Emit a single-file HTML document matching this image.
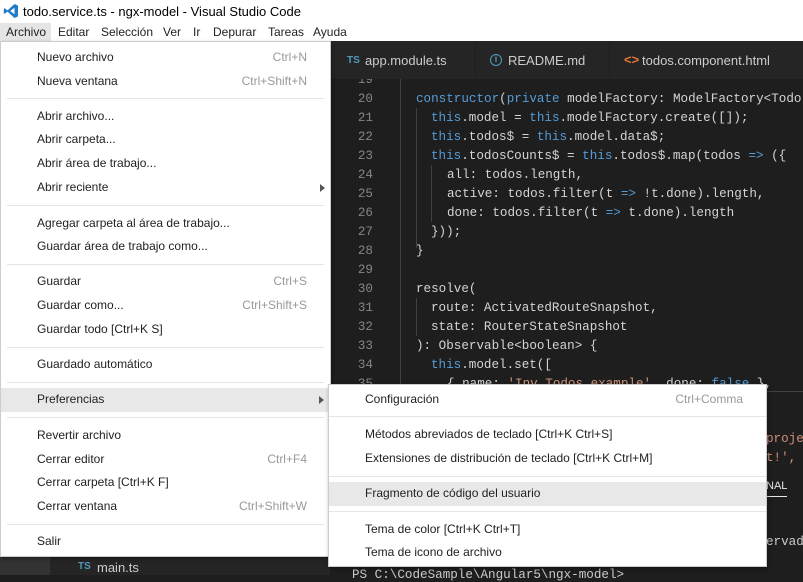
<!DOCTYPE html>
<html><head><meta charset="utf-8"><style>
*{margin:0;padding:0;box-sizing:border-box}
body{width:803px;height:575px;overflow:hidden;position:relative;background:#1e1e1e;font-family:"Liberation Sans",sans-serif;font-size:12px}
.a{position:absolute;white-space:nowrap}
.code{font-family:"Liberation Mono",monospace;font-size:12.6px;color:#d4d4d4}
.ln{color:#858585;width:30px;text-align:right;left:343px}
.k{color:#569cd6}.s{color:#ce9178}
.menu{position:absolute;background:#fff;border:1px solid #ccc;box-shadow:1px 2px 4px rgba(0,0,0,.35);z-index:5}
.it{position:absolute;left:0;right:0;height:23px;line-height:23px;color:#222}
.it .t{position:absolute;left:36px}
.it .sc{position:absolute;right:23px;color:#999}
.sep{position:absolute;left:6px;right:6px;height:1px;background:#e5e5e5}
.hl{background:#e8e8e8}
.arr{position:absolute;right:5px;top:8px;width:0;height:0;border-left:5px solid #555;border-top:4px solid transparent;border-bottom:4px solid transparent}
.tb{z-index:3}
</style></head><body>
<!-- title bar -->
<div class="a" style="left:0;top:0;width:803px;height:23px;background:#fff"></div>
<svg class="a" style="left:3px;top:3px" width="16" height="16" viewBox="0 0 16 16"><path d="M11.5 1 L15 2.6 V13.4 L11.5 15 L4.5 8.6 L1.8 10.7 L0.8 10.2 V5.8 L1.8 5.3 L4.5 7.4 Z M11.5 4.7 L7.2 8 L11.5 11.3 Z" fill="#1e7cc8"/></svg>
<div class="a" style="left:23px;top:4px;font-size:13px;color:#000">todo.service.ts - ngx-model - Visual Studio Code</div>
<!-- menu bar -->
<div class="a" style="left:0;top:23px;width:803px;height:18px;background:#fff"></div>
<div class="a" style="left:0;top:23px;width:51px;height:18px;background:#e5e5e5"></div>
<div class="a" style="top:25px;left:6px;color:#222">Archivo</div>
<div class="a" style="top:25px;left:58px;color:#222">Editar</div>
<div class="a" style="top:25px;left:101px;color:#222">Selección</div>
<div class="a" style="top:25px;left:163px;color:#222">Ver</div>
<div class="a" style="top:25px;left:193px;color:#222">Ir</div>
<div class="a" style="top:25px;left:213px;color:#222">Depurar</div>
<div class="a" style="top:25px;left:268px;color:#222">Tareas</div>
<div class="a" style="top:25px;left:313px;color:#222">Ayuda</div>
<!-- sidebar -->
<div class="a" style="left:0;top:41px;width:50px;height:534px;background:#333"></div>
<div class="a" style="left:50px;top:41px;width:280px;height:534px;background:#252526"></div>
<div class="a" style="left:78px;top:561px;color:#519aba;font-weight:bold;font-size:10px">TS</div>
<div class="a" style="left:97px;top:560px;color:#ccc;font-size:13px">main.ts</div>
<!-- code -->
<div class="a" style="left:400px;top:79px;width:1px;height:310px;background:#404040"></div>
<div class="a" style="left:416px;top:108px;width:1px;height:140px;background:#404040"></div>
<div class="a" style="left:431px;top:165px;width:1px;height:57px;background:#404040"></div>
<div class="a" style="left:416px;top:298px;width:1px;height:38px;background:#404040"></div>
<div class="code">
<div class="a ln" style="top:73px">19</div>
<div class="a ln" style="top:92px">20</div><div class="a" style="left:416px;top:92px"><span class="k">constructor</span>(<span class="k">private</span> modelFactory: ModelFactory&lt;Todo</div>
<div class="a ln" style="top:111px">21</div><div class="a" style="left:431px;top:111px"><span class="k">this</span>.model = <span class="k">this</span>.modelFactory.create([]);</div>
<div class="a ln" style="top:130px">22</div><div class="a" style="left:431px;top:130px"><span class="k">this</span>.todos$ = <span class="k">this</span>.model.data$;</div>
<div class="a ln" style="top:149px">23</div><div class="a" style="left:431px;top:149px"><span class="k">this</span>.todosCounts$ = <span class="k">this</span>.todos$.map(todos <span class="k">=&gt;</span> ({</div>
<div class="a ln" style="top:168px">24</div><div class="a" style="left:447px;top:168px">all: todos.length,</div>
<div class="a ln" style="top:187px">25</div><div class="a" style="left:447px;top:187px">active: todos.filter(t <span class="k">=&gt;</span> !t.done).length,</div>
<div class="a ln" style="top:206px">26</div><div class="a" style="left:447px;top:206px">done: todos.filter(t <span class="k">=&gt;</span> t.done).length</div>
<div class="a ln" style="top:225px">27</div><div class="a" style="left:431px;top:225px">}));</div>
<div class="a ln" style="top:244px">28</div><div class="a" style="left:416px;top:244px">}</div>
<div class="a ln" style="top:263px">29</div>
<div class="a ln" style="top:282px">30</div><div class="a" style="left:416px;top:282px">resolve(</div>
<div class="a ln" style="top:301px">31</div><div class="a" style="left:431px;top:301px">route: ActivatedRouteSnapshot,</div>
<div class="a ln" style="top:320px">32</div><div class="a" style="left:431px;top:320px">state: RouterStateSnapshot</div>
<div class="a ln" style="top:339px">33</div><div class="a" style="left:416px;top:339px">): Observable&lt;boolean&gt; {</div>
<div class="a ln" style="top:358px">34</div><div class="a" style="left:431px;top:358px"><span class="k">this</span>.model.set([</div>
<div class="a ln" style="top:377px">35</div><div class="a" style="left:447px;top:377px">{ name: <span class="s">'Inv Todos example'</span>, done: <span class="k">false</span> },</div>
<div class="a" style="left:330px;top:391px;width:473px;height:184px;background:#1e1e1e;border-top:1px solid #414141"></div>
<div class="a s" style="left:766px;top:432px">projec</div>
<div class="a s" style="left:766px;top:451px">t!', c</div>
<div class="a" style="left:766px;top:480px;font-family:'Liberation Sans',sans-serif;font-size:11px;color:#e7e7e7">NAL</div>
<div class="a" style="left:766px;top:496px;width:21px;height:1px;background:#e7e7e7"></div>
<div class="a" style="left:766px;top:535px;color:#ccc">ervado</div>
<div class="a" style="left:352px;top:568px;color:#ccc">PS C:\CodeSample\Angular5\ngx-model&gt;</div>
</div>
<!-- tabs -->
<div class="a tb" style="left:330px;top:41px;width:473px;height:38px;background:#252526"></div>
<div class="a tb" style="left:475px;top:41px;width:1px;height:38px;background:#1e1e1e"></div>
<div class="a tb" style="left:609px;top:41px;width:1px;height:38px;background:#1e1e1e"></div>
<div class="a tb" style="left:347px;top:55px;color:#519aba;font-weight:bold;font-size:10px">TS</div>
<div class="a tb" style="left:365px;top:53px;color:#ccc;font-size:13px">app.module.ts</div>
<div class="a tb" style="left:490px;top:54px;width:12px;height:12px;border:1.5px solid #519aba;border-radius:50%;color:#519aba;font-size:9px;line-height:9px;text-align:center;font-weight:bold">i</div>
<div class="a tb" style="left:508px;top:53px;color:#ccc;font-size:13px">README.md</div>
<div class="a tb" style="left:624px;top:52px;color:#e37933;font-size:13px;font-weight:bold">&lt;&gt;</div>
<div class="a tb" style="left:642px;top:53px;color:#ccc;font-size:13px">todos.component.html</div>
<!-- main menu -->
<div class="menu" style="left:0;top:41px;width:331px;height:516px">
<div class="it" style="top:4px"><span class="t">Nuevo archivo</span><span class="sc">Ctrl+N</span></div>
<div class="it" style="top:28px"><span class="t">Nueva ventana</span><span class="sc">Ctrl+Shift+N</span></div>
<div class="sep" style="top:56px"></div>
<div class="it" style="top:63px"><span class="t">Abrir archivo...</span></div>
<div class="it" style="top:86px"><span class="t">Abrir carpeta...</span></div>
<div class="it" style="top:110px"><span class="t">Abrir área de trabajo...</span></div>
<div class="it" style="top:134px"><span class="t">Abrir reciente</span><span class="arr"></span></div>
<div class="sep" style="top:163px"></div>
<div class="it" style="top:170px"><span class="t">Agregar carpeta al área de trabajo...</span></div>
<div class="it" style="top:193px"><span class="t">Guardar área de trabajo como...</span></div>
<div class="sep" style="top:222px"></div>
<div class="it" style="top:228px"><span class="t">Guardar</span><span class="sc">Ctrl+S</span></div>
<div class="it" style="top:252px"><span class="t">Guardar como...</span><span class="sc">Ctrl+Shift+S</span></div>
<div class="it" style="top:276px"><span class="t">Guardar todo [Ctrl+K S]</span></div>
<div class="sep" style="top:305px"></div>
<div class="it" style="top:311px"><span class="t">Guardado automático</span></div>
<div class="sep" style="top:340px"></div>
<div class="it hl" style="top:346px;height:24px;right:1px"><span class="t">Preferencias</span><span class="arr"></span></div>
<div class="sep" style="top:375px"></div>
<div class="it" style="top:382px"><span class="t">Revertir archivo</span></div>
<div class="it" style="top:406px"><span class="t">Cerrar editor</span><span class="sc">Ctrl+F4</span></div>
<div class="it" style="top:429px"><span class="t">Cerrar carpeta [Ctrl+K F]</span></div>
<div class="it" style="top:453px"><span class="t">Cerrar ventana</span><span class="sc">Ctrl+Shift+W</span></div>
<div class="sep" style="top:482px"></div>
<div class="it" style="top:488px"><span class="t">Salir</span></div>
</div>
<!-- submenu -->
<div class="menu" style="left:328px;top:384px;width:439px;height:183px">
<div class="it" style="top:3px"><span class="t">Configuración</span><span class="sc">Ctrl+Comma</span></div>
<div class="sep" style="top:31px;left:0;right:0"></div>
<div class="it" style="top:38px"><span class="t">Métodos abreviados de teclado [Ctrl+K Ctrl+S]</span></div>
<div class="it" style="top:62px"><span class="t">Extensiones de distribución de teclado [Ctrl+K Ctrl+M]</span></div>
<div class="sep" style="top:91px;left:0;right:0"></div>
<div class="it hl" style="top:97px;height:24px"><span class="t">Fragmento de código del usuario</span></div>
<div class="sep" style="top:126px;left:0;right:0"></div>
<div class="it" style="top:133px"><span class="t">Tema de color [Ctrl+K Ctrl+T]</span></div>
<div class="it" style="top:156px"><span class="t">Tema de icono de archivo</span></div>
</div>
</body></html>
